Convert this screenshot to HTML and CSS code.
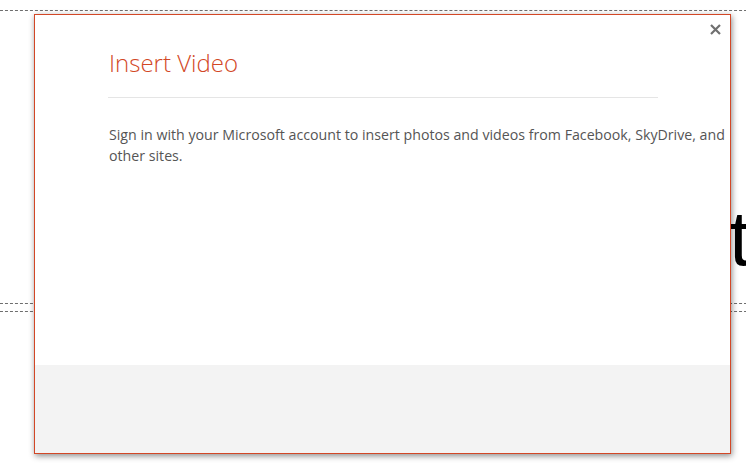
FILE: index.html
```html
<!DOCTYPE html>
<html lang="en">
<head>
  <meta charset="UTF-8">
  <meta name="viewport" content="width=device-width, initial-scale=1">
  <title>Insert Video</title>
  <link rel="stylesheet" href="styles.css">
</head>
<body>

<div class="stage">
  <div class="placeholder title-box">
    <span class="slide-title">t</span>
  </div>
  <div class="placeholder sub-box"></div>

  <div class="dialog">
    <div class="dialog-body">
      <button class="close" title="Close">
        <svg width="11" height="11" viewBox="0 0 11 11"><path d="M1 1L10 10M10 1L1 10" stroke="#707070" stroke-width="2.2"/></svg>
      </button>
      <h2>Insert Video</h2>
      <hr class="rule">
      <p class="info">Sign in with your Microsoft account to insert photos and videos from Facebook, SkyDrive, and other sites.</p>
    </div>
    <div class="dialog-footer"></div>
  </div>
</div>

</body>
</html>
```

FILE: styles.css
```css
html, body {
  margin: 0;
  padding: 0;
  background: #fff;
  overflow: hidden;
}
.stage {
  position: relative;
  width: 746px;
  height: 465px;
  overflow: hidden;
  font-family: 'Open Sans', 'Noto Sans', sans-serif;
}
.placeholder {
  position: absolute;
  left: -20px;
  width: 800px;
  border: 1px dashed #6e6e6e;
}
.title-box {
  top: 10px;
  height: 292px;
}
.sub-box {
  top: 311px;
  height: 200px;
}
.slide-title {
  position: absolute;
  left: 748px;
  top: 188px;
  font-family: 'Liberation Sans', Arial, sans-serif;
  font-size: 78px;
  line-height: 1;
  color: #000;
}
.dialog {
  position: absolute;
  left: 34px;
  top: 14px;
  width: 695px;
  height: 438px;
  border: 1px solid #d24726;
  background: #fff;
  box-shadow: 1px 2px 6px rgba(0,0,0,0.45);
  display: flex;
  flex-direction: column;
}
.dialog-body {
  flex: 1;
  position: relative;
  padding: 32px 0 0 74px;
}
.dialog-footer {
  height: 88px;
  background: #f3f3f3;
}
.close {
  position: absolute;
  top: 9px;
  right: 9px;
  border: 0;
  background: none;
  padding: 0;
  line-height: 0;
  cursor: pointer;
}
h2 {
  margin: 0;
  font-weight: 300;
  font-size: 24px;
  line-height: 32px;
  color: #d24726;
}
.rule {
  width: 550px;
  margin: 18px 0 0 -1px;
  border: 0;
  border-top: 1px solid #e5e5e5;
}
.info {
  margin: 26px 0 0;
  width: 622px;
  font-size: 14.2px;
  line-height: 21px;
  color: #555;
}
```
